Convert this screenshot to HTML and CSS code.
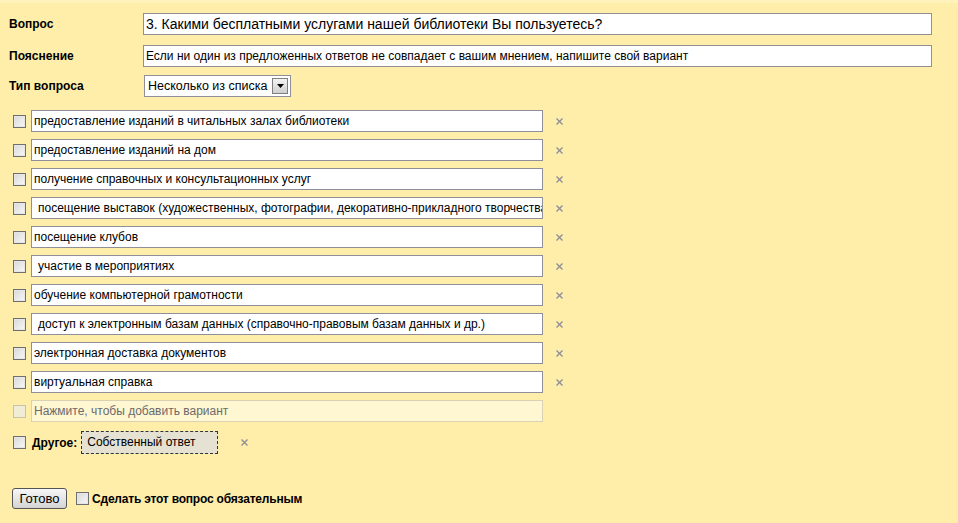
FILE: index.html
```html
<!DOCTYPE html>
<html lang="ru">
<head>
<meta charset="utf-8">
<title>Редактирование вопроса</title>
<link rel="stylesheet" href="styles.css">
</head>
<body>
<div class="page">
  <div class="field-row">
    <label class="field-label">Вопрос</label>
    <div class="text-input wide q">3. Какими бесплатными услугами нашей библиотеки Вы пользуетесь?</div>
  </div>
  <div class="field-row hint-row">
    <label class="field-label">Пояснение</label>
    <div class="text-input wide hint">Если ни один из предложенных ответов не совпадает с вашим мнением, напишите свой вариант</div>
  </div>
  <div class="field-row type-row">
    <label class="field-label">Тип вопроса</label>
    <div class="select">
      <span class="select-text">Несколько из списка</span>
      <span class="select-btn"><svg width="7" height="4" viewBox="0 0 7 4"><path d="M0 0h7L3.5 4z" fill="#000"/></svg></span>
    </div>
  </div>

  <div class="options">
    <div class="opt-row"><span class="cb"></span><div class="text-input opt">предоставление изданий в читальных залах библиотеки</div><span class="del"><svg width="7" height="7" viewBox="0 0 7 7"><path d="M0.5 0.5l6 6M6.5 0.5l-6 6" stroke="#8a8c99" stroke-width="1.3"/></svg></span></div>
    <div class="opt-row"><span class="cb"></span><div class="text-input opt">предоставление изданий на дом</div><span class="del"><svg width="7" height="7" viewBox="0 0 7 7"><path d="M0.5 0.5l6 6M6.5 0.5l-6 6" stroke="#8a8c99" stroke-width="1.3"/></svg></span></div>
    <div class="opt-row"><span class="cb"></span><div class="text-input opt">получение справочных и консультационных услуг</div><span class="del"><svg width="7" height="7" viewBox="0 0 7 7"><path d="M0.5 0.5l6 6M6.5 0.5l-6 6" stroke="#8a8c99" stroke-width="1.3"/></svg></span></div>
    <div class="opt-row"><span class="cb"></span><div class="text-input opt indent">посещение выставок (художественных, фотографии, декоративно-прикладного творчества)</div><span class="del"><svg width="7" height="7" viewBox="0 0 7 7"><path d="M0.5 0.5l6 6M6.5 0.5l-6 6" stroke="#8a8c99" stroke-width="1.3"/></svg></span></div>
    <div class="opt-row"><span class="cb"></span><div class="text-input opt">посещение клубов</div><span class="del"><svg width="7" height="7" viewBox="0 0 7 7"><path d="M0.5 0.5l6 6M6.5 0.5l-6 6" stroke="#8a8c99" stroke-width="1.3"/></svg></span></div>
    <div class="opt-row"><span class="cb"></span><div class="text-input opt indent">участие в мероприятиях</div><span class="del"><svg width="7" height="7" viewBox="0 0 7 7"><path d="M0.5 0.5l6 6M6.5 0.5l-6 6" stroke="#8a8c99" stroke-width="1.3"/></svg></span></div>
    <div class="opt-row"><span class="cb"></span><div class="text-input opt">обучение компьютерной грамотности</div><span class="del"><svg width="7" height="7" viewBox="0 0 7 7"><path d="M0.5 0.5l6 6M6.5 0.5l-6 6" stroke="#8a8c99" stroke-width="1.3"/></svg></span></div>
    <div class="opt-row"><span class="cb"></span><div class="text-input opt indent">доступ к электронным базам данных (справочно-правовым базам данных и др.)</div><span class="del"><svg width="7" height="7" viewBox="0 0 7 7"><path d="M0.5 0.5l6 6M6.5 0.5l-6 6" stroke="#8a8c99" stroke-width="1.3"/></svg></span></div>
    <div class="opt-row"><span class="cb"></span><div class="text-input opt">электронная доставка документов</div><span class="del"><svg width="7" height="7" viewBox="0 0 7 7"><path d="M0.5 0.5l6 6M6.5 0.5l-6 6" stroke="#8a8c99" stroke-width="1.3"/></svg></span></div>
    <div class="opt-row"><span class="cb"></span><div class="text-input opt">виртуальная справка</div><span class="del"><svg width="7" height="7" viewBox="0 0 7 7"><path d="M0.5 0.5l6 6M6.5 0.5l-6 6" stroke="#8a8c99" stroke-width="1.3"/></svg></span></div>
    <div class="opt-row"><span class="cb disabled"></span><div class="text-input opt add">Нажмите, чтобы добавить вариант</div></div>
  </div>

  <div class="other-row">
    <span class="cb"></span>
    <span class="other-label">Другое:</span>
    <div class="other-box">Собственный ответ</div>
    <span class="del other-del"><svg width="7" height="7" viewBox="0 0 7 7"><path d="M0.5 0.5l6 6M6.5 0.5l-6 6" stroke="#8a8c99" stroke-width="1.3"/></svg></span>
  </div>

  <div class="footer-row">
    <button class="btn">Готово</button>
    <span class="cb"></span>
    <span class="req-label">Сделать этот вопрос обязательным</span>
  </div>
</div>
</body>
</html>
```
FILE: styles.css
```css
html, body {
  margin: 0;
  padding: 0;
}
body {
  background: #ffeeaa;
  font-family: "Liberation Sans", Arial, sans-serif;
  font-size: 13px;
  color: #000;
  width: 958px;
  height: 523px;
  overflow: hidden;
}
.page {
  border-top: 3px solid #fff2bb;
  padding-top: 10px;
}
.field-row {
  display: flex;
  align-items: center;
  height: 22px;
  margin-bottom: 10px;
}
.field-row.hint-row {
  margin-bottom: 8px;
}
.field-row.type-row {
  margin-bottom: 13px;
}
.field-label {
  width: 134px;
  padding-left: 9px;
  font-weight: bold;
  font-size: 12px;
  flex-shrink: 0;
}
.text-input {
  box-sizing: border-box;
  height: 22px;
  background: #fff;
  border: 1px solid #8e8f99;
  padding: 0 3px 0 2px;
  line-height: 20px;
  white-space: nowrap;
  overflow: hidden;
}
.text-input.wide {
  width: 789px;
}
.text-input.q {
  font-size: 14px;
}
.text-input.hint {
  font-size: 12px;
}
.select {
  box-sizing: border-box;
  display: flex;
  align-items: center;
  width: 147px;
  height: 22px;
  margin-left: 1px;
  background: #fff;
  border: 1px solid #8e8f99;
  padding: 0 2px 0 3px;
  white-space: nowrap;
}
.select-text {
  flex: 1;
  font-size: 12.5px;
  white-space: nowrap;
  overflow: hidden;
}
.select-btn {
  box-sizing: border-box;
  width: 16px;
  height: 16px;
  flex-shrink: 0;
  display: flex;
  align-items: center;
  justify-content: center;
  border: 1px solid #7f7f7f;
  background: linear-gradient(#f4f4f4, #cfcfcf);
}
.options {
  display: flex;
  flex-direction: column;
  gap: 7px;
}
.opt-row {
  display: flex;
  align-items: center;
  height: 22px;
  padding-left: 13px;
}
.cb {
  box-sizing: border-box;
  width: 13px;
  height: 13px;
  flex-shrink: 0;
  border: 1px solid #6f6f6f;
  background: linear-gradient(135deg, #d8d8d8, #f8f8f8);
  box-shadow: inset 0 0 0 1px #e6e6e6;
}
.cb.disabled {
  border-color: #c8c2a8;
  background: #f1ecd6;
  box-shadow: none;
}
.text-input.opt {
  width: 512px;
  margin-left: 5px;
  font-size: 12px;
}
.text-input.opt.indent {
  padding-left: 6px;
}
.text-input.opt.add {
  background: #fff6d2;
  border-color: #d8d1b4;
  color: #6b6b6b;
}
.del {
  display: flex;
  margin-left: 13px;
}
.other-row {
  display: flex;
  align-items: center;
  height: 23px;
  padding-left: 13px;
  margin-top: 9px;
}
.other-label {
  font-weight: bold;
  font-size: 12px;
  margin-left: 6px;
}
.other-box {
  box-sizing: border-box;
  width: 137px;
  height: 23px;
  margin-left: 4px;
  border: 1px dashed #333;
  background: #e6e2d3;
  padding-left: 5px;
  line-height: 21px;
  font-size: 12px;
}
.other-del {
  margin-left: 23px;
}
.footer-row {
  display: flex;
  align-items: center;
  padding-left: 12px;
  margin-top: 34px;
}
.btn {
  box-sizing: border-box;
  width: 55px;
  height: 21px;
  font-family: "Liberation Sans", Arial, sans-serif;
  font-size: 13px;
  padding: 0;
  border: 1px solid #555;
  border-radius: 3px;
  background: linear-gradient(#f7f7f7, #d4d4d4);
  color: #000;
  margin-right: 9px;
}
.req-label {
  font-weight: bold;
  font-size: 12px;
  margin-left: 3px;
  letter-spacing: -0.2px;
}
```
